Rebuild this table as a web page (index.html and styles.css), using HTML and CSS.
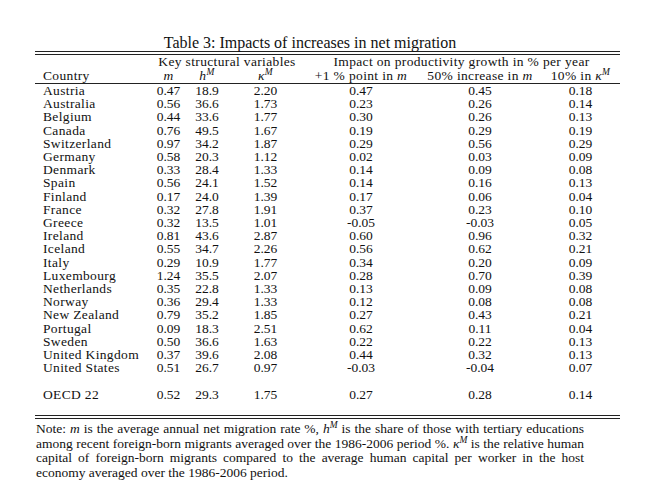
FILE: index.html
```
<!DOCTYPE html>
<html lang="en">
<head>
  <meta charset="UTF-8" />
  <meta name="viewport" content="width=device-width, initial-scale=1.0"/>
  <title>Table 3: Impacts of increases in net migration</title>
  <link rel="stylesheet" href="styles.css">
</head>
<body>
  <div class="page">
    <p class="caption">Table 3: Impacts of increases in net migration</p>
    <div class="double-rule"></div>

    <table class="results">
      <colgroup>
        <col class="col-country">
        <col class="col-m">
        <col class="col-h">
        <col class="col-k">
        <col class="col-pt">
        <col class="col-half">
        <col class="col-ten">
      </colgroup>
      <thead>
        <tr class="group-row">
          <th></th>
          <th colspan="3">Key structural variables</th>
          <th colspan="3">Impact on productivity growth in % per year</th>
        </tr>
        <tr class="head-row">
          <th class="country">Country</th>
          <th><i>m</i></th>
          <th><i>h</i><sup><i>M</i></sup></th>
          <th><i>κ</i><sup><i>M</i></sup></th>
          <th>+1 % point in <i>m</i></th>
          <th>50% increase in <i>m</i></th>
          <th>10% in <i>κ</i><sup><i>M</i></sup></th>
        </tr>
      </thead>
      <tbody>
        <tr><td class="country">Austria</td><td>0.47</td><td>18.9</td><td>2.20</td><td>0.47</td><td>0.45</td><td>0.18</td></tr>
        <tr><td class="country">Australia</td><td>0.56</td><td>36.6</td><td>1.73</td><td>0.23</td><td>0.26</td><td>0.14</td></tr>
        <tr><td class="country">Belgium</td><td>0.44</td><td>33.6</td><td>1.77</td><td>0.30</td><td>0.26</td><td>0.13</td></tr>
        <tr><td class="country">Canada</td><td>0.76</td><td>49.5</td><td>1.67</td><td>0.19</td><td>0.29</td><td>0.19</td></tr>
        <tr><td class="country">Switzerland</td><td>0.97</td><td>34.2</td><td>1.87</td><td>0.29</td><td>0.56</td><td>0.29</td></tr>
        <tr><td class="country">Germany</td><td>0.58</td><td>20.3</td><td>1.12</td><td>0.02</td><td>0.03</td><td>0.09</td></tr>
        <tr><td class="country">Denmark</td><td>0.33</td><td>28.4</td><td>1.33</td><td>0.14</td><td>0.09</td><td>0.08</td></tr>
        <tr><td class="country">Spain</td><td>0.56</td><td>24.1</td><td>1.52</td><td>0.14</td><td>0.16</td><td>0.13</td></tr>
        <tr><td class="country">Finland</td><td>0.17</td><td>24.0</td><td>1.39</td><td>0.17</td><td>0.06</td><td>0.04</td></tr>
        <tr><td class="country">France</td><td>0.32</td><td>27.8</td><td>1.91</td><td>0.37</td><td>0.23</td><td>0.10</td></tr>
        <tr><td class="country">Greece</td><td>0.32</td><td>13.5</td><td>1.01</td><td>-0.05</td><td>-0.03</td><td>0.05</td></tr>
        <tr><td class="country">Ireland</td><td>0.81</td><td>43.6</td><td>2.87</td><td>0.60</td><td>0.96</td><td>0.32</td></tr>
        <tr><td class="country">Iceland</td><td>0.55</td><td>34.7</td><td>2.26</td><td>0.56</td><td>0.62</td><td>0.21</td></tr>
        <tr><td class="country">Italy</td><td>0.29</td><td>10.9</td><td>1.77</td><td>0.34</td><td>0.20</td><td>0.09</td></tr>
        <tr><td class="country">Luxembourg</td><td>1.24</td><td>35.5</td><td>2.07</td><td>0.28</td><td>0.70</td><td>0.39</td></tr>
        <tr><td class="country">Netherlands</td><td>0.35</td><td>22.8</td><td>1.33</td><td>0.13</td><td>0.09</td><td>0.08</td></tr>
        <tr><td class="country">Norway</td><td>0.36</td><td>29.4</td><td>1.33</td><td>0.12</td><td>0.08</td><td>0.08</td></tr>
        <tr><td class="country">New Zealand</td><td>0.79</td><td>35.2</td><td>1.85</td><td>0.27</td><td>0.43</td><td>0.21</td></tr>
        <tr><td class="country">Portugal</td><td>0.09</td><td>18.3</td><td>2.51</td><td>0.62</td><td>0.11</td><td>0.04</td></tr>
        <tr><td class="country">Sweden</td><td>0.50</td><td>36.6</td><td>1.63</td><td>0.22</td><td>0.22</td><td>0.13</td></tr>
        <tr><td class="country">United Kingdom</td><td>0.37</td><td>39.6</td><td>2.08</td><td>0.44</td><td>0.32</td><td>0.13</td></tr>
        <tr><td class="country">United States</td><td>0.51</td><td>26.7</td><td>0.97</td><td>-0.03</td><td>-0.04</td><td>0.07</td></tr>
        <tr class="total"><td class="country">OECD 22</td><td>0.52</td><td>29.3</td><td>1.75</td><td>0.27</td><td>0.28</td><td>0.14</td></tr>
      </tbody>
    </table>

    <div class="double-rule bottom"></div>

    <p class="note">Note: <i>m</i> is the average annual net migration rate %, <i>h</i><sup><i>M</i></sup> is the share of those with tertiary educations among recent foreign-born migrants averaged over the 1986-2006 period %. <i>κ</i><sup><i>M</i></sup> is the relative human capital of foreign-born migrants compared to the average human capital per worker in the host economy averaged over the 1986-2006 period.</p>
  </div>
</body>
</html>
```

FILE: styles.css
```
body {
  margin: 0;
  background: #fff;
  color: #111;
  font-family: 'Liberation Serif', 'Times New Roman', serif;
  font-size: 13.5px;
}

.page {
  padding: 36px 0 0 35px;
  width: 585px;
}

/* title sits a little left of the table's centre */
.caption {
  margin: 0 0 1px;
  padding-right: 35px;
  font-size: 16px;
  line-height: 14px;
  text-align: center;
}

.double-rule {
  height: 2px;
  border-top: 1px solid #222;
  border-bottom: 1px solid #222;
}

.double-rule.bottom {
  margin-top: 1px;
}

.results {
  width: 585px;
  table-layout: fixed;
  border-collapse: separate;
  border-spacing: 0;
}

.col-country { width: 116px; }
.col-m { width: 35px; }
.col-h { width: 42px; }
.col-k { width: 75px; }
.col-pt { width: 116px; }
.col-half { width: 122px; }
.col-ten { width: 79px; }

.results th,
.results td {
  padding: 0;
  font-weight: normal;
  text-align: center;
  white-space: nowrap;
}

.results th {
  height: 14px;
  line-height: 14px;
  letter-spacing: 0.35px;
}

.results td {
  height: 13.2px;
  line-height: 13.2px;
}

.results .country {
  text-align: left;
  padding-left: 8px;
  letter-spacing: 0.35px;
}

.head-row th {
  border-bottom: 1px solid #222;
}

.results tr.total td {
  padding-top: 13.2px;
  padding-bottom: 13.2px;
}

sup {
  font-size: 0.7em;
  line-height: 0;
  vertical-align: 0.5em;
}

.note {
  margin: 3px 0 0;
  width: 548px;
  padding-left: 1px;
  line-height: 14.6px;
  text-align: justify;
}
```
